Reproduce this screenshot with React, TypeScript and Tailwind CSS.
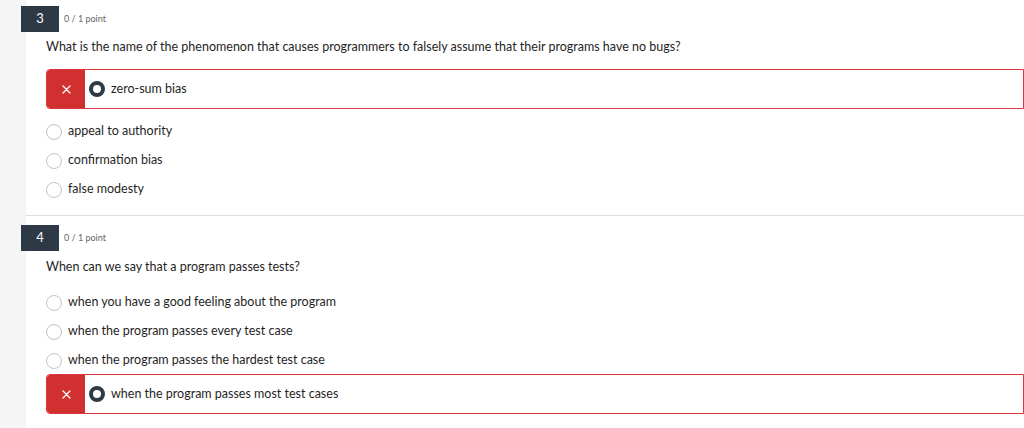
import React from "react";

function Radio() {
  return <span className="w-[16px] h-[16px] rounded-full border border-[#c4c4c4] bg-white shrink-0" />;
}

function SelectedWrong({ label }: { label: string }) {
  return (
    <div className="ml-[20px] h-[40px] flex items-stretch border border-[#d9363e] rounded-l-[4px] overflow-hidden">
      <div className="w-[38px] bg-[#d0302f] flex items-center justify-center shrink-0">
        <svg width="9" height="9" viewBox="0 0 9 9" fill="none">
          <path d="M1 1 L8 8 M8 1 L1 8" stroke="white" strokeWidth="1.3" strokeLinecap="round" />
        </svg>
      </div>
      <div className="flex items-center pl-[4px]">
        <span className="w-[16px] h-[16px] rounded-full border-[4px] border-[#2e3a45] bg-white shrink-0" />
        <span className="ml-[6px] text-[12.5px] text-[#1f1f1f]">{label}</span>
      </div>
    </div>
  );
}

function Option({ label }: { label: string }) {
  return (
    <div className="ml-[20px] h-[29px] flex items-center">
      <Radio />
      <span className="ml-[6px] text-[12.5px] text-[#1f1f1f]">{label}</span>
    </div>
  );
}

function Header({ n }: { n: number }) {
  return (
    <div className="flex items-center h-[26px] ml-[-5px]">
      <div className="w-[38px] h-[26px] bg-[#2d3a45] text-white text-[13px] flex items-center justify-center">{n}</div>
      <span className="ml-[5px] text-[9px] text-[#666]">0 / 1 point</span>
    </div>
  );
}

export default function App() {
  return (
    <div className="w-[1024px] h-[428px] overflow-hidden bg-white flex" style={{ fontFamily: "Lato, 'Open Sans', sans-serif" }}>
      <div className="w-[26px] bg-[#f5f5f5] shrink-0" />
      <div className="flex-1 min-w-0">
        <div className="pt-[6px]">
          <Header n={3} />
          <div className="ml-[20px] mt-[6px] leading-[18px] text-[12.5px] text-[#1f1f1f]">
            What is the name of the phenomenon that causes programmers to falsely assume that their programs have no bugs?
          </div>
          <div className="mt-[13px]">
            <SelectedWrong label="zero-sum bias" />
          </div>
          <div className="mt-[8px]">
            <Option label="appeal to authority" />
            <Option label="confirmation bias" />
            <Option label="false modesty" />
          </div>
        </div>
        <div className="mt-[11px] border-t border-[#dedede]" />
        <div className="pt-[9px]">
          <Header n={4} />
          <div className="ml-[20px] mt-[7px] leading-[18px] text-[12.5px] text-[#1f1f1f]">
            When can we say that a program passes tests?
          </div>
          <div className="mt-[12px]">
            <Option label="when you have a good feeling about the program" />
            <Option label="when the program passes every test case" />
            <Option label="when the program passes the hardest test case" />
          </div>
          <div className="mt-[-1px]">
            <SelectedWrong label="when the program passes most test cases" />
          </div>
        </div>
      </div>
    </div>
  );
}
